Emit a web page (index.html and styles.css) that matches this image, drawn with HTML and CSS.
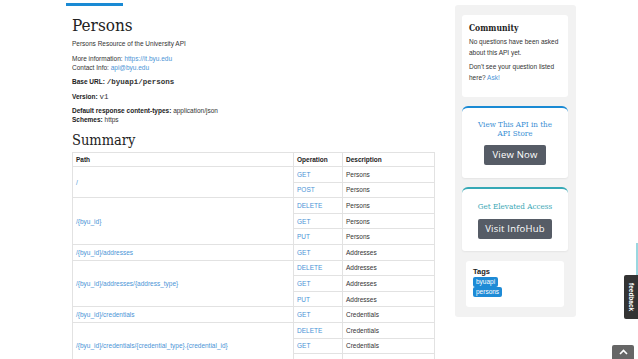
FILE: index.html
```html
<!DOCTYPE html>
<html lang="en">
<head>
    <meta charset="UTF-8">
    <meta name="viewport" content="width=device-width, initial-scale=1.0">
    <title>Persons API</title>
    <link rel="stylesheet" href="styles.css">
</head>
<body>
    <div class="page">
        <div class="main">
            <div class="top-bar"></div>
            <h1>Persons</h1>
            <p>Persons Resource of the University API</p>
            <p>More information: <a href="#">https://it.byu.edu</a><br>Contact Info: <a href="#">api@byu.edu</a></p>
            <p><b>Base URL:</b> <code>/byuapi/persons</code></p>
            <p><b>Version:</b> <code class="plain">v1</code></p>
            <p><b>Default response content-types:</b> application/json<br><b>Schemes:</b> https</p>

            <h2>Summary</h2>
            <table class="summary">
                <thead>
                    <tr><th class="path">Path</th><th class="op">Operation</th><th>Description</th></tr>
                </thead>
                <tbody>
                    <tr><td rowspan="2"><a href="#">/</a></td><td><a href="#">GET</a></td><td>Persons</td></tr>
                    <tr><td><a href="#">POST</a></td><td>Persons</td></tr>

                    <tr><td rowspan="3"><a href="#">/{byu_id}</a></td><td><a href="#">DELETE</a></td><td>Persons</td></tr>
                    <tr><td><a href="#">GET</a></td><td>Persons</td></tr>
                    <tr><td><a href="#">PUT</a></td><td>Persons</td></tr>

                    <tr><td><a href="#">/{byu_id}/addresses</a></td><td><a href="#">GET</a></td><td>Addresses</td></tr>

                    <tr><td rowspan="3"><a href="#">/{byu_id}/addresses/{address_type}</a></td><td><a href="#">DELETE</a></td><td>Addresses</td></tr>
                    <tr><td><a href="#">GET</a></td><td>Addresses</td></tr>
                    <tr><td><a href="#">PUT</a></td><td>Addresses</td></tr>

                    <tr><td><a href="#">/{byu_id}/credentials</a></td><td><a href="#">GET</a></td><td>Credentials</td></tr>

                    <tr><td rowspan="3"><a href="#">/{byu_id}/credentials/{credential_type}.{credential_id}</a></td><td><a href="#">DELETE</a></td><td>Credentials</td></tr>
                    <tr><td><a href="#">GET</a></td><td>Credentials</td></tr>
                    <tr><td><a href="#">PUT</a></td><td>Credentials</td></tr>
                </tbody>
            </table>
        </div>

        <div class="sidebar">
            <div class="card community">
                <h3>Community</h3>
                <p>No questions have been asked about this API yet.</p>
                <p>Don't see your question listed here? <a href="#">Ask!</a></p>
            </div>
            <div class="card promo store">
                <h4>View This API in the<br>API Store</h4>
                <a class="btn" href="#">View Now</a>
            </div>
            <div class="card promo access">
                <h4>Get Elevated Access</h4>
                <a class="btn" href="#">Visit InfoHub</a>
            </div>
            <div class="card tags">
                <h5>Tags</h5>
                <span class="tag">byuapi</span>
                <span class="tag">persons</span>
            </div>
        </div>
    </div>

    <div class="feedback-strip"></div>
    <div class="feedback">feedback</div>
    <a class="to-top" href="#">
        <svg width="9" height="6" viewBox="0 0 9 6"><path d="M1 5 L4.5 1.5 L8 5" fill="none" stroke="#fff" stroke-width="1.6"/></svg>
    </a>
</body>
</html>
```

FILE: styles.css
```css
body {
    margin: 0;
    height: 359px;
    overflow: hidden;
    font-family: "Liberation Sans", Arial, sans-serif;
    font-size: 6.5px;
    color: #333;
    background-color: #fff;
}

a {
    color: #4a94d6;
    text-decoration: none;
}

.page {
    display: flex;
    gap: 20px;
    padding-left: 66px;
}

.main {
    width: 369px;
}

.top-bar {
    width: 57px;
    height: 3px;
    margin-top: 3px;
    background-color: #1a8ad4;
}

h1 {
    font-family: "DejaVu Serif", serif;
    font-stretch: condensed;
    font-weight: normal;
    font-size: 17px;
    color: #222;
    margin: 9px 0 4px 6px;
    line-height: 20px;
}

.main p {
    margin: 0 0 5.5px 6px;
    line-height: 9px;
}

.main p b {
    color: #222;
}

code {
    font-family: "Liberation Mono", monospace;
    font-weight: bold;
    font-size: 7.5px;
    line-height: 8px;
    color: #333;
}

code.plain {
    font-weight: normal;
}

h2 {
    font-family: "DejaVu Serif", serif;
    font-stretch: condensed;
    font-weight: normal;
    font-size: 14.5px;
    color: #222;
    margin: 8px 0 3px 6px;
    line-height: 17px;
}

.summary {
    margin-left: 6px;
    width: 363px;
    border-collapse: collapse;
}

.summary th,
.summary td {
    border: 1px solid #e2e2e2;
    padding: 0 3px;
    height: 14.6px;
    text-align: left;
    vertical-align: middle;
}

.summary th {
    font-weight: bold;
    color: #222;
    height: 13px;
}

.summary th.path {
    width: 214px;
}

.summary th.op {
    width: 42px;
}

.sidebar {
    width: 121px;
    margin-top: 5px;
    padding: 10px 8px 13px 7px;
    box-sizing: border-box;
    background-color: #f2f2f2;
    border-radius: 3px;
    display: flex;
    flex-direction: column;
    gap: 9px;
    height: 312px;
}

.card {
    background-color: #fff;
    border-radius: 3px;
}

.community {
    padding: 8px 7px 10px 7px;
}

.community h3 {
    font-family: "DejaVu Serif", serif;
    font-stretch: condensed;
    font-size: 8.5px;
    margin: 0 0 4px 0;
    color: #222;
}

.community p {
    margin: 0 0 4px 0;
    line-height: 10.5px;
}

.promo {
    border-top: 2px solid #1a8ad4;
    border-radius: 6px 6px 3px 3px;
    text-align: center;
    padding: 12px 4px 13px 4px;
    box-shadow: 0 1px 2px rgba(0, 0, 0, 0.06);
}

.promo h4 {
    font-family: "DejaVu Serif", serif;
    font-stretch: condensed;
    font-weight: normal;
    font-size: 8px;
    line-height: 9px;
    color: #3a8fd4;
    margin: 0 0 7px 0;
    white-space: nowrap;
}

.access {
    border-top-color: #36a9b6;
    padding-top: 13px;
    padding-bottom: 12px;
}

.access h4 {
    color: #3aa7b5;
    margin-bottom: 8px;
}

.btn {
    display: inline-block;
    background-color: #565c66;
    color: #fff;
    font-family: "Open Sans", sans-serif;
    font-weight: 500;
    font-size: 9.5px;
    letter-spacing: 0.2px;
    line-height: 20px;
    padding: 0 7px;
    border-radius: 2px;
}

.store .btn {
    width: 48px;
}

.tags {
    margin: 1px 4px 0 4px;
    padding: 6px 7px 10px 7px;
}

.tags h5 {
    font-size: 7.5px;
    margin: 0 0 1px 0;
    color: #222;
}

.tag {
    display: table;
    background-color: #1e8bd6;
    color: #fff;
    padding: 0 3px;
    line-height: 10px;
    border-radius: 2px;
    font-size: 6.5px;
}

.feedback-strip {
    position: fixed;
    right: 0;
    top: 243px;
    width: 2px;
    height: 33px;
    background-color: #9ad7e0;
}

.feedback {
    position: fixed;
    right: 0;
    top: 275px;
    width: 14px;
    height: 44px;
    background-color: #333;
    color: #fff;
    font-weight: bold;
    font-size: 6.5px;
    writing-mode: vertical-rl;
    text-align: center;
    line-height: 14px;
    border-radius: 2px 0 0 2px;
}

.to-top {
    position: fixed;
    right: 4px;
    bottom: 0;
    width: 22px;
    height: 14px;
    background-color: #666;
    border-radius: 2px 2px 0 0;
    display: flex;
    justify-content: center;
    align-items: center;
}
```
